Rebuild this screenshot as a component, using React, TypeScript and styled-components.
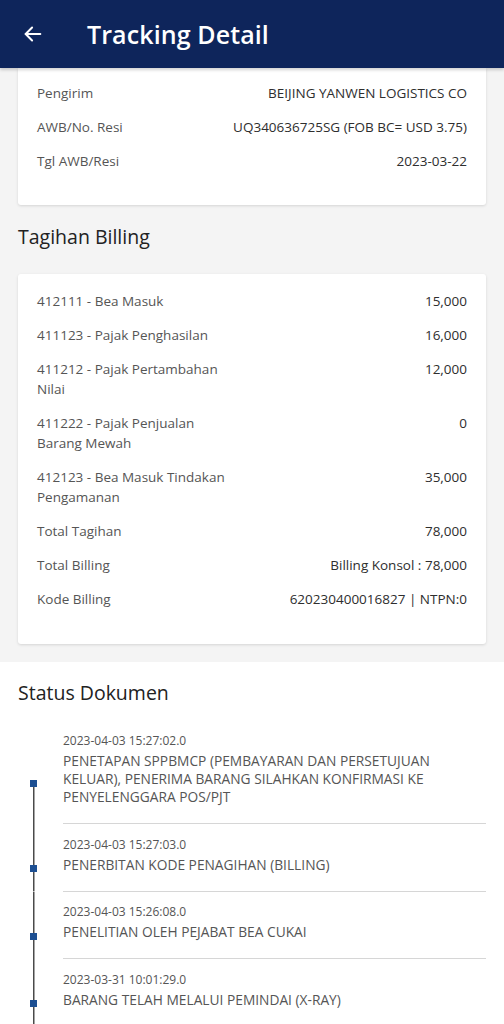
import React from "react";
import styled, { createGlobalStyle } from "styled-components";

const Global = createGlobalStyle`
  html, body {
    margin: 0;
    padding: 0;
    background: #f4f4f4;
    font-family: "Open Sans", "Noto Sans", sans-serif;
  }
  * { box-sizing: border-box; }
`;

const Page = styled.div`
  width: 504px;
  min-height: 1024px;
  background: #f4f4f4;
`;

const Header = styled.header`
  height: 68px;
  background: #0e255b;
  display: flex;
  align-items: center;
  padding-left: 22px;
  gap: 43px;
  box-shadow: 0 2px 3px rgba(0, 0, 0, 0.18);
  position: relative;
  z-index: 1;
`;

const BackButton = styled.button`
  border: 0;
  background: none;
  padding: 0;
  display: flex;
  color: #fff;
  cursor: pointer;
`;

const Title = styled.h1`
  margin: 0;
  color: #fff;
  font-size: 25px;
  font-weight: 600;
  letter-spacing: 0.1px;
`;

const Card = styled.div<{ $cut?: boolean }>`
  margin: 0 18px;
  background: #fff;
  border-radius: ${(p) => (p.$cut ? "0 0 3px 3px" : "3px")};
  box-shadow: 0 1px 3px rgba(0, 0, 0, 0.13);
  padding: ${(p) => (p.$cut ? "15px 19px 34px" : "17px 19px 21px")};
  display: flex;
  flex-direction: column;
  gap: 14px;
`;

const Row = styled.div`
  display: flex;
  justify-content: space-between;
  align-items: flex-start;
  gap: 16px;
  font-size: 13.5px;
  line-height: 20px;
`;

const Label = styled.span<{ $narrow?: boolean }>`
  color: #555;
  max-width: ${(p) => (p.$narrow ? "200px" : "none")};
`;

const Value = styled.span`
  color: #2e2e2e;
  text-align: right;
  white-space: nowrap;
`;

const SectionTitle = styled.h2`
  margin: 0;
  padding: 18px 18px 24px;
  font-size: 19.5px;
  font-weight: 400;
  color: #222;
`;

const Status = styled.section`
  margin-top: 18px;
  background: #fff;
  padding-bottom: 10px;
`;

const StatusTitle = styled(SectionTitle)`
  padding: 17px 18px 14px;
`;

const Item = styled.div`
  display: grid;
  grid-template-columns: 63px 1fr;
  grid-template-rows: auto auto auto;
  padding-right: 18px;
`;

const Rail = styled.div<{ $first?: boolean }>`
  grid-column: 1;
  grid-row: ${(p) => (p.$first ? "2 / 4" : "1 / 4")};
  background: linear-gradient(#4a4a4a, #4a4a4a) no-repeat;
  background-size: 1.5px ${(p) => (p.$first ? "calc(100% - 34px)" : "100%")};
  background-position: 33px 100%;
`;

const Marker = styled.span`
  grid-column: 1;
  grid-row: 2;
  align-self: center;
  justify-self: start;
  margin: 8px 0 0 30px;
  width: 7px;
  height: 7px;
  background: #1d4f92;
`;

const Date = styled.div`
  grid-column: 2;
  grid-row: 1;
  padding-top: 12.5px;
  margin-bottom: 3px;
  font-size: 12px;
  line-height: 16px;
  color: #555;
`;

const Desc = styled.div`
  grid-column: 2;
  grid-row: 2;
  font-size: 13.75px;
  line-height: 18.4px;
  color: #555;
  text-transform: uppercase;
`;

const Divider = styled.hr`
  grid-column: 2;
  grid-row: 3;
  margin: 16.5px 0 0;
  border: 0;
  border-top: 1.5px solid #d6d6d6;
`;

const shipment = [
  ["Pengirim", "BEIJING YANWEN LOGISTICS CO"],
  ["AWB/No. Resi", "UQ340636725SG (FOB BC= USD 3.75)"],
  ["Tgl AWB/Resi", "2023-03-22"],
];

const billing = [
  ["412111 - Bea Masuk", "15,000"],
  ["411123 - Pajak Penghasilan", "16,000"],
  ["411212 - Pajak Pertambahan Nilai", "12,000"],
  ["411222 - Pajak Penjualan Barang Mewah", "0"],
  ["412123 - Bea Masuk Tindakan Pengamanan", "35,000"],
  ["Total Tagihan", "78,000"],
  ["Total Billing", "Billing Konsol : 78,000"],
  ["Kode Billing", "620230400016827 | NTPN:0"],
];

const history = [
  {
    date: "2023-04-03 15:27:02.0",
    text: "Penetapan SPPBMCP (Pembayaran dan Persetujuan Keluar), Penerima Barang silahkan konfirmasi ke Penyelenggara POS/PJT",
  },
  { date: "2023-04-03 15:27:03.0", text: "Penerbitan Kode Penagihan (Billing)" },
  { date: "2023-04-03 15:26:08.0", text: "Penelitian oleh Pejabat Bea Cukai" },
  { date: "2023-03-31 10:01:29.0", text: "Barang telah melalui pemindai (X-Ray)" },
];

export default function App() {
  return (
    <Page>
      <Global />
      <Header>
        <BackButton aria-label="Kembali">
          <svg width="22" height="22" viewBox="0 0 24 24" fill="none" stroke="currentColor" strokeWidth="2.2" strokeLinecap="round" strokeLinejoin="round">
            <path d="M20 12H4" />
            <path d="M11 5l-7 7 7 7" />
          </svg>
        </BackButton>
        <Title>Tracking Detail</Title>
      </Header>

      <Card $cut>
        {shipment.map(([k, v]) => (
          <Row key={k}>
            <Label>{k}</Label>
            <Value>{v}</Value>
          </Row>
        ))}
      </Card>

      <SectionTitle>Tagihan Billing</SectionTitle>
      <Card>
        {billing.map(([k, v]) => (
          <Row key={k}>
            <Label $narrow>{k}</Label>
            <Value>{v}</Value>
          </Row>
        ))}
        <span />
      </Card>

      <Status>
        <StatusTitle>Status Dokumen</StatusTitle>
        {history.map((h, i) => (
          <Item key={h.date}>
            <Rail $first={i === 0} />
            <Marker />
            <Date>{h.date}</Date>
            <Desc>{h.text}</Desc>
            <Divider />
          </Item>
        ))}
      </Status>
    </Page>
  );
}
